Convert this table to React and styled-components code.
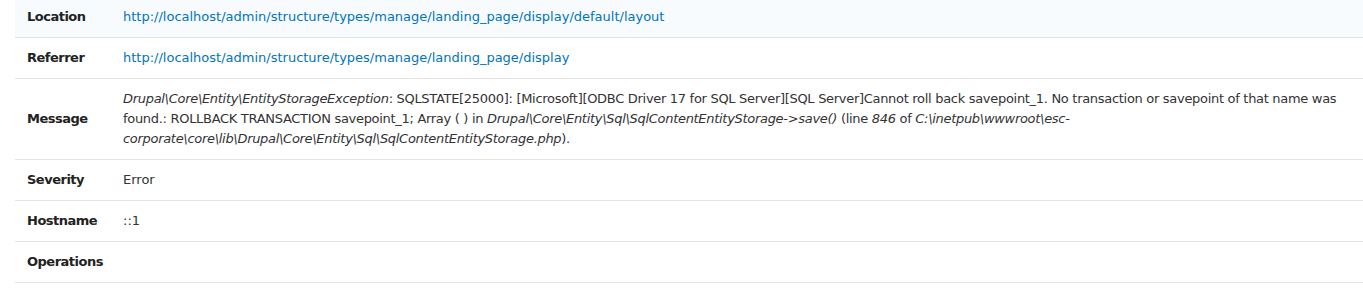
import React from "react";
import styled, { createGlobalStyle } from "styled-components";

const GlobalStyle = createGlobalStyle`
  html, body {
    margin: 0;
    padding: 0;
    background: #ffffff;
  }
  body {
    font-family: "DejaVu Sans", "Liberation Sans", sans-serif;
    font-size: 13px;
    color: #333333;
    overflow: hidden;
  }
`;

const Table = styled.table`
  border-collapse: collapse;
  table-layout: fixed;
  width: calc(100% - 15px);
  margin: -3px 0 0 15px;
`;

const Row = styled.tr`
  background: ${({ $highlight }) => ($highlight ? "#f7fbfe" : "#ffffff")};
  border-bottom: 1px solid #e6e4df;
`;

const Label = styled.th`
  width: 72px;
  padding: 10px 12px;
  text-align: left;
  vertical-align: middle;
  font-weight: bold;
  letter-spacing: -0.5px;
  color: #222222;
  line-height: 20px;
  white-space: nowrap;
`;

const Value = styled.td`
  padding: 10px 12px;
  vertical-align: middle;
  line-height: 20px;
  color: #333333;
  letter-spacing: ${({ $tight }) => ($tight ? "-0.3px" : "0")};
`;

const Link = styled.a`
  color: #0074bd;
  text-decoration: none;
`;

const Em = styled.em`
  font-style: italic;
`;

const rows = [
  {
    label: "Location",
    highlight: true,
    value: (
      <Link href="#">
        http://localhost/admin/structure/types/manage/landing_page/display/default/layout
      </Link>
    ),
  },
  {
    label: "Referrer",
    value: (
      <Link href="#">
        http://localhost/admin/structure/types/manage/landing_page/display
      </Link>
    ),
  },
  {
    label: "Message",
    tight: true,
    value: (
      <>
        <Em>Drupal\Core\Entity\EntityStorageException</Em>: SQLSTATE[25000]:
        [Microsoft][ODBC Driver 17 for SQL Server][SQL Server]Cannot roll back
        savepoint_1. No transaction or savepoint of that name was found.:
        ROLLBACK TRANSACTION savepoint_1; Array ( ) in{" "}
        <Em>Drupal\Core\Entity\Sql\SqlContentEntityStorage-&gt;save()</Em> (line{" "}
        <Em>846</Em> of{" "}
        <Em>
          C:\inetpub\wwwroot\esc-corporate\core\lib\Drupal\Core\Entity\Sql\SqlContentEntityStorage.php
        </Em>
        ).
      </>
    ),
  },
  { label: "Severity", value: "Error" },
  { label: "Hostname", value: "::1" },
  { label: "Operations", value: "" },
];

export default function App() {
  return (
    <>
      <GlobalStyle />
      <Table>
        <tbody>
          {rows.map((r) => (
            <Row key={r.label} $highlight={r.highlight}>
              <Label>{r.label}</Label>
              <Value $tight={r.tight}>{r.value}</Value>
            </Row>
          ))}
        </tbody>
      </Table>
    </>
  );
}
